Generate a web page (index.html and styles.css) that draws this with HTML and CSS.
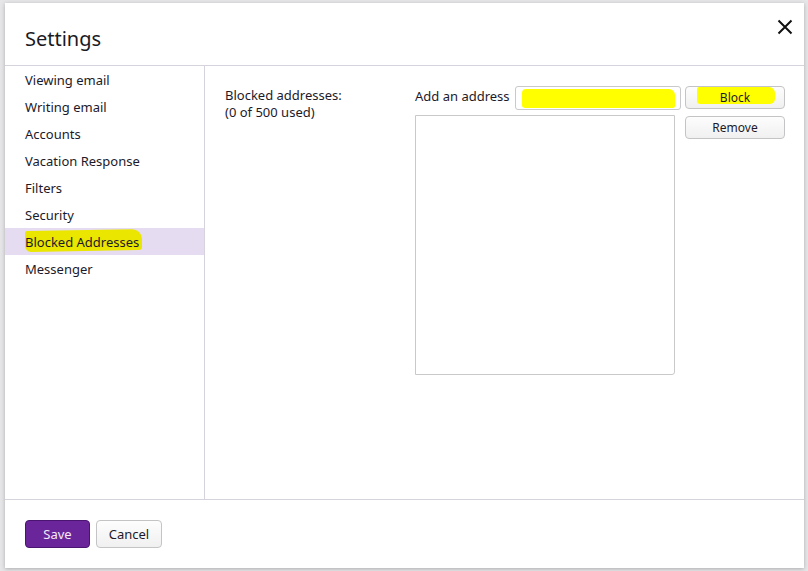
FILE: index.html
```html
<!DOCTYPE html>
<html>
<head>
<meta charset="utf-8">
<link rel="stylesheet" href="styles.css">
</head>
<body>
<div class="dialog">
  <div class="header">
    <h1 class="title">Settings</h1>
    <button class="close" aria-label="Close">
      <svg width="16" height="16" viewBox="0 0 16 16"><path d="M1.5 1.5 L14.5 14.5 M14.5 1.5 L1.5 14.5" stroke="#111" stroke-width="2" fill="none"/></svg>
    </button>
  </div>
  <div class="main">
    <ul class="nav">
      <li class="nav-item">Viewing email</li>
      <li class="nav-item">Writing email</li>
      <li class="nav-item">Accounts</li>
      <li class="nav-item">Vacation Response</li>
      <li class="nav-item">Filters</li>
      <li class="nav-item">Security</li>
      <li class="nav-item active"><span class="marker marker-nav"></span><span class="nav-text">Blocked Addresses</span></li>
      <li class="nav-item">Messenger</li>
    </ul>
    <div class="content">
      <div class="label-col">
        <div>Blocked addresses:</div>
        <div>(0 of 500 used)</div>
      </div>
      <div class="list-col">
        <div class="add-row">
          <span class="add-label">Add an address</span>
          <div class="input"><span class="marker marker-input"></span></div>
        </div>
        <div class="listbox"></div>
      </div>
      <div class="btn-col">
        <button class="btn btn-small"><span class="marker marker-block"></span><span class="btn-text">Block</span></button>
        <button class="btn btn-small">Remove</button>
      </div>
    </div>
  </div>
  <div class="footer">
    <button class="btn btn-primary">Save</button>
    <button class="btn btn-default">Cancel</button>
  </div>
</div>
</body>
</html>
```
FILE: styles.css
```css
html, body {
  margin: 0;
  padding: 0;
}
body {
  background: #e6e6e9;
  font-family: "Noto Sans", "Open Sans", sans-serif;
  font-size: 13px;
  color: #1c1a2a;
  width: 808px;
  height: 571px;
  overflow: hidden;
}
.dialog {
  margin: 3px 0 0 5px;
  width: 799px;
  height: 565px;
  background: #fff;
  box-shadow: 0 1px 4px rgba(0,0,0,0.25);
  display: flex;
  flex-direction: column;
}
.header {
  height: 62px;
  border-bottom: 1px solid #d6d3dc;
  display: flex;
  align-items: center;
  justify-content: space-between;
  padding: 0 11px 0 20px;
  flex: none;
}
.title {
  margin: 9px 0 0 0;
  font-size: 20px;
  font-weight: normal;
  color: #1a1a24;
}
.close {
  border: 0;
  background: none;
  padding: 0;
  width: 16px;
  height: 16px;
  margin-top: -15px;
  display: flex;
}
.main {
  flex: 1;
  display: flex;
  min-height: 0;
}
.nav {
  list-style: none;
  margin: 0;
  padding: 0;
  width: 199px;
  border-right: 1px solid #d6d3dc;
  flex: none;
}
.nav-item {
  height: 27px;
  line-height: 28px;
  padding-left: 20px;
  position: relative;
}
.nav-item.active {
  background: #e6dcf2;
}
.nav-text {
  position: relative;
}
.marker {
  position: absolute;
  background: #f2ef00;
}
.marker-nav {
  left: 20px;
  top: 2px;
  width: 117px;
  height: 21px;
  border-radius: 2px 10px 3px 6px;
  background: #eae600;
  transform: skewY(-1deg);
}
.content {
  flex: 1;
  display: flex;
  padding: 20px 0 0 20px;
  align-items: flex-start;
}
.label-col {
  width: 190px;
  line-height: 17px;
  margin-top: 1px;
}
.list-col {
  width: 266px;
  display: flex;
  flex-direction: column;
  gap: 5px;
}
.add-row {
  display: flex;
  align-items: center;
}
.add-label {
  width: 100px;
  margin-top: -5px;
}
.input {
  width: 164px;
  height: 22px;
  border: 1px solid #c9c9cc;
  border-radius: 3px;
  position: relative;
}
.marker-input {
  left: 6px;
  top: 2px;
  width: 153px;
  height: 19px;
  background: #ffff00;
  border-radius: 4px 6px 2px 3px;
}
.listbox {
  width: 258px;
  height: 258px;
  border: 1px solid #c9c9cc;
  border-radius: 0 0 3px 0;
}
.btn-col {
  display: flex;
  flex-direction: column;
  gap: 7px;
  margin-left: 4px;
}
.btn {
  font-family: inherit;
  font-size: 12px;
  color: #1c1a2a;
  border: 1px solid #c4c4c6;
  border-radius: 4px;
  background: linear-gradient(#fdfdfd, #f0f0f0);
  padding: 0;
  position: relative;
}
.btn-small {
  width: 100px;
  height: 23px;
}
.marker-block {
  left: 11px;
  top: 0px;
  width: 78px;
  height: 17px;
  background: #ffff00;
  border-radius: 2px 6px 5px 3px;
}
.btn-text {
  position: relative;
}
.footer {
  height: 69px;
  border-top: 1px solid #d6d3dc;
  flex: none;
  display: flex;
  align-items: flex-start;
  padding: 20px 0 0 20px;
  gap: 6px;
  box-sizing: border-box;
}
.btn-primary {
  width: 65px;
  height: 28px;
  font-size: 13px;
  background: #6b259a;
  border-color: #4a1570;
  color: #f2eaf8;
}
.btn-default {
  width: 66px;
  height: 28px;
  font-size: 13px;
}
```
